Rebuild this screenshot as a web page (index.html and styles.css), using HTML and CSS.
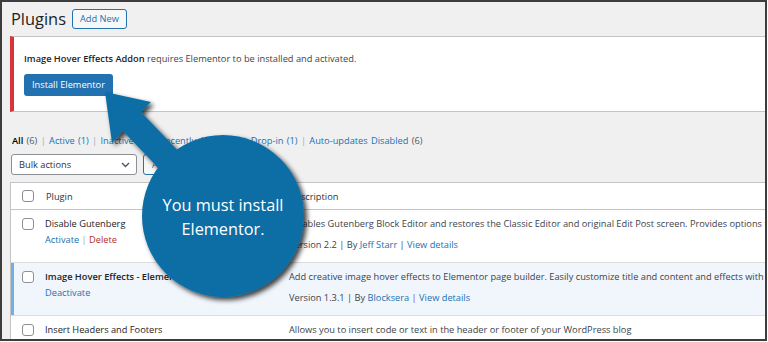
FILE: index.html
```html
<!DOCTYPE html>
<html lang="en">
<head>
  <meta charset="UTF-8">
  <title>Plugins</title>
  <link rel="stylesheet" href="styles.css">
</head>
<body>

  <div class="frame">
    <div class="wrap">
      <!-- Page title -->
      <div class="page-title">
        <h1>Plugins</h1>
        <a class="add-new">Add New</a>
      </div>

      <!-- Dependency notice -->
      <div class="notice">
        <p><strong>Image Hover Effects Addon</strong> requires Elementor to be installed and activated.</p>
        <a class="button-primary">Install Elementor</a>
      </div>

      <!-- Filter links -->
      <ul class="views">
        <li><a class="current">All <span class="count">(6)</span></a> |</li>
        <li><a>Active <span class="count">(1)</span></a> |</li>
        <li><a>Inactive <span class="count">(5)</span></a> |</li>
        <li><a>Recently Active <span class="count">(1)</span></a> |</li>
        <li><a>Drop-in <span class="count">(1)</span></a> |</li>
        <li><a>Auto-updates Disabled <span class="count gray">(6)</span></a></li>
      </ul>

      <div class="tablenav">
        <div class="select">
          <span>Bulk actions</span>
          <svg width="9" height="6" viewBox="0 0 9 6"><path d="M1 1l3.5 3.5L8 1" fill="none" stroke="#50575e" stroke-width="1.4"/></svg>
        </div>
        <a class="apply">Apply</a>
      </div>

      <!-- Plugin list -->
      <div class="plugins">
        <div class="thead">
          <div class="check"><span class="box"></span></div>
          <div>Plugin</div>
          <div>Description</div>
        </div>

        <div class="row">
          <div class="check"><span class="box"></span></div>
          <div>
            <div class="name">Disable Gutenberg</div>
            <div class="actions"><a>Activate</a> <span class="sep">|</span> <a class="delete">Delete</a></div>
          </div>
          <div class="desc">
            <p>Disables Gutenberg Block Editor and restores the Classic Editor and original Edit Post screen. Provides options to enable on specific post types, user roles, and more.</p>
            <p class="meta">Version 2.2 | By <a>Jeff Starr</a> | <a>View details</a></p>
          </div>
        </div>

        <div class="row active">
          <div class="check"><span class="box"></span></div>
          <div>
            <div class="name">Image Hover Effects - Elementor Addon</div>
            <div class="actions"><a>Deactivate</a></div>
          </div>
          <div class="desc">
            <p>Add creative image hover effects to Elementor page builder. Easily customize title and content and effects with various styles.</p>
            <p class="meta">Version 1.3.1 | By <a>Blocksera</a> <span class="visited">|</span> <a>View details</a></p>
          </div>
        </div>

        <div class="row">
          <div class="check"><span class="box"></span></div>
          <div>
            <div class="name">Insert Headers and Footers</div>
          </div>
          <div class="desc">
            <p>Allows you to insert code or text in the header or footer of your WordPress blog</p>
          </div>
        </div>
      </div>
    </div>

    <!-- Callout over the page -->
    <svg class="callout" width="767" height="341" viewBox="0 0 767 341">
      <defs>
        <filter id="shadow" x="-20%" y="-20%" width="140%" height="140%">
          <feDropShadow dx="3" dy="3" stdDeviation="2.5" flood-color="#000" flood-opacity="0.75"/>
        </filter>
      </defs>
      <g filter="url(#shadow)" fill="#0d6ea6">
        <path d="M105 92L151 102L141 112L231 206L213 225L123 131L112 143Z"/>
        <circle cx="223" cy="216" r="81"/>
      </g>
      <text class="bubble-text" x="223" y="211">You must install</text>
      <text class="bubble-text" x="223" y="235">Elementor.</text>
    </svg>
  </div>

</body>
</html>
```

FILE: styles.css
```css
/* Plugins screen */
* {
  box-sizing: border-box;
}

body {
  margin: 0;
  background: #fff;
  font-family: "Open Sans", "Noto Sans", sans-serif;
  font-size: 9.25px;
  color: #3c434a;
}

a {
  color: #2271b1;
}

.frame {
  position: relative;
  width: 767px;
  height: 341px;
  border: 2px solid #3d3d3d;
  background: #f0f0f1;
  overflow: hidden;
}

.wrap {
  width: 1000px;
  padding: 7px 0 0 8px;
}

.page-title {
  display: flex;
  align-items: center;
  gap: 6px;
  height: 20px;
}

h1 {
  margin: 0 0 0 1px;
  font-size: 16.4px;
  font-weight: 400;
  line-height: 20px;
  color: #1d2327;
}

.add-new {
  height: 20px;
  padding: 0 7px;
  line-height: 18px;
  border: 1px solid #2271b1;
  border-radius: 3px;
  background: #f6f7f7;
}

.notice {
  margin-top: 7px;
  padding: 15px 10px 15px;
  background: #fff;
  border: 1px solid #c3c4c7;
  border-left: 4px solid #d63638;
}

.notice p {
  margin: 0 0 8px;
  line-height: 14px;
}

.notice strong {
  font-weight: 600;
  color: #1d2327;
}

.button-primary {
  display: inline-block;
  padding: 0 8px;
  line-height: 22px;
  color: #fff;
  background: #2271b1;
  border-radius: 3px;
}

.views {
  list-style: none;
  margin: 22px 0 0;
  padding: 0 0 0 2px;
  line-height: 14px;
  word-spacing: 0.9px;
  color: #a7aaad;
}

.views li {
  display: inline;
}

.views .current {
  color: #000;
  font-weight: 600;
}

.views .current .count,
.views .gray {
  color: #50575e;
  font-weight: 400;
}

.tablenav {
  display: flex;
  gap: 6px;
  height: 21px;
  margin-top: 6px;
  margin-left: 1px;
}

.select {
  display: flex;
  align-items: center;
  justify-content: space-between;
  width: 126px;
  padding: 0 6px 0 7px;
  color: #2c3338;
  background: #fff;
  border: 1px solid #8c8f94;
  border-radius: 3px;
}

.apply {
  padding: 0 8px;
  line-height: 19px;
  background: #f6f7f7;
  border: 1px solid #2271b1;
  border-radius: 3px;
}

.plugins {
  margin-top: 7px;
  background: #fff;
  border: 1px solid #c3c4c7;
}

.thead, .row {
  display: grid;
  grid-template-columns: 34px 244px 1fr;
}

.thead {
  height: 27px;
  align-items: center;
  color: #2c3338;
  border-bottom: 1px solid #c3c4c7;
}

.thead > div:nth-child(2) {
  padding-left: 1px;
}

.check {
  display: flex;
  padding-left: 11px;
}

.box {
  width: 12px;
  height: 12px;
  background: #fff;
  border: 1px solid #8c8f94;
  border-radius: 3px;
}

.row {
  height: 53px;
  padding-top: 6px;
  line-height: 16px;
  border-bottom: 1px solid #dcdcde;
}

.row .check {
  padding-top: 2px;
}

.name {
  color: #1d2327;
}

.active {
  background: #f0f6fc;
  box-shadow: inset 3px 0 0 #72aee6;
}

.active .name {
  font-weight: 600;
}

.sep {
  color: #a7aaad;
}

.delete {
  color: #b32d2e;
}

.desc {
  white-space: nowrap;
}

.desc p {
  margin: 0;
}

.desc .meta {
  margin-top: 5px;
}

.visited {
  color: #8a3ea0;
}

.callout {
  position: absolute;
  left: -2px;
  top: -2px;
}

.bubble-text {
  font-family: "Open Sans", sans-serif;
  font-size: 16.3px;
  fill: #fff;
  text-anchor: middle;
}
```
